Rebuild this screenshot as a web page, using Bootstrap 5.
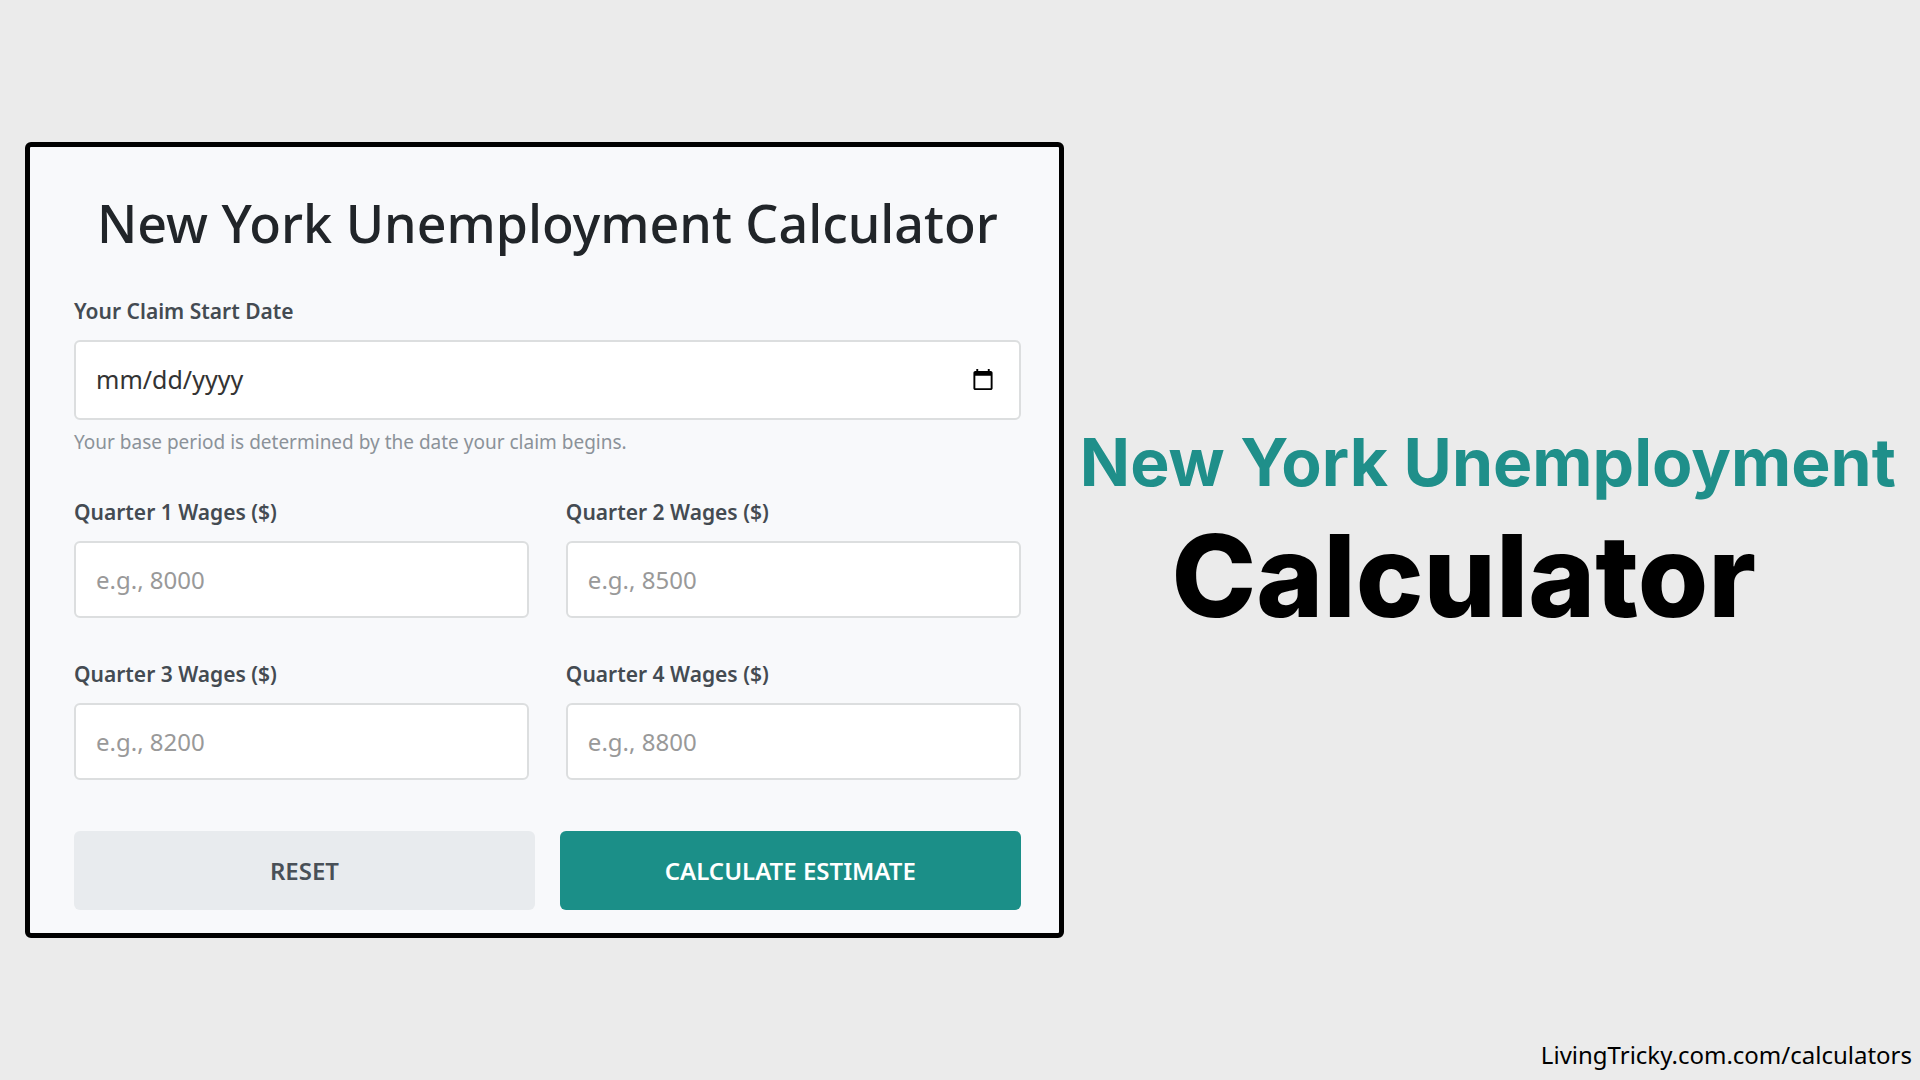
<!DOCTYPE html>
<html lang="en">
<head>
<meta charset="utf-8">
<meta name="viewport" content="width=device-width, initial-scale=1">
<title>New York Unemployment Calculator</title>
<link href="https://cdn.jsdelivr.net/npm/bootstrap@5.3.0/dist/css/bootstrap.min.css" rel="stylesheet">
<style>
  body { background: #ebebeb; font-family: "Noto Sans", sans-serif; color: #212529; }
  .page { min-height: 100vh; display: grid; grid-template-rows: 1fr auto 1fr; }
  .calc-panel { flex: 0 0 54.1%; margin-left: 25px; padding: 44px 38px 23px 44px; background: #f8f9fb; border: 5px solid #000; border-radius: 6px; }
  .calc-title { font-size: 52px; line-height: 64px; font-weight: 500; margin-bottom: 41px; color: #212529; }
  .form-label { font-size: 21px; line-height: 30px; font-weight: 600; margin-bottom: 14px; color: #444b52; }
  .form-control { height: 77px; padding: 0 20px; font-size: 24px; border: 2px solid #dcdedf; border-radius: 6px; color: #333; }
  .form-control::placeholder { color: #999; }
  .date-box { height: 80px; font-size: 25px; }
  .date-box::-webkit-calendar-picker-indicator { width: 24px; height: 24px; padding: 0; margin-right: 4px; }
  .date-hint { font-size: 19px; line-height: 24px; margin: 10px 0 43px; color: #8b9299; }
  .wages { display: grid; grid-template-columns: 1fr 1fr; gap: 41px 37px; margin-bottom: 51px; }
  .actions { gap: 25px; }
  .actions .btn { flex: 1 1 0; height: 79px; font-size: 24px; font-weight: 600; border: 0; border-radius: 6px; }
  .btn-reset, .btn-reset:hover { background: #e8ebee; color: #495057; }
  .btn-calc, .btn-calc:hover { background: #1b8f88; color: #fff; }
  .hero { font-family: Inter, sans-serif; padding: 0 8px 16px 0; }
  .hero-top { font-size: 66px; line-height: 80px; font-weight: 700; color: #1f8f8a; }
  .hero-main { font-size: 114px; line-height: 132px; font-weight: 800; color: #000; padding-right: 48px; }
  .site-link { font-size: 24px; line-height: 32px; color: #000; padding: 0 8px 9px; }
</style>
<script src="https://cdn.jsdelivr.net/npm/bootstrap@5.3.0/dist/js/bootstrap.bundle.min.js"></script>
</head>
<body>
<div class="page">
  <div></div>
  <main class="d-flex align-items-center">
    <form class="calc-panel">
      <h1 class="calc-title text-center text-nowrap">New York Unemployment Calculator</h1>
      <label class="form-label d-block" for="start">Your Claim Start Date</label>
      <input class="form-control date-box" type="date" id="start" aria-describedby="hint">
      <p class="date-hint" id="hint">Your base period is determined by the date your claim begins.</p>
      <div class="wages">
        <div><label class="form-label d-block" for="q1">Quarter 1 Wages ($)</label><input class="form-control" type="text" inputmode="decimal" id="q1" placeholder="e.g., 8000"></div>
        <div><label class="form-label d-block" for="q2">Quarter 2 Wages ($)</label><input class="form-control" type="text" inputmode="decimal" id="q2" placeholder="e.g., 8500"></div>
        <div><label class="form-label d-block" for="q3">Quarter 3 Wages ($)</label><input class="form-control" type="text" inputmode="decimal" id="q3" placeholder="e.g., 8200"></div>
        <div><label class="form-label d-block" for="q4">Quarter 4 Wages ($)</label><input class="form-control" type="text" inputmode="decimal" id="q4" placeholder="e.g., 8800"></div>
      </div>
      <div class="actions d-flex">
        <button class="btn btn-reset" type="reset">RESET</button>
        <button class="btn btn-calc" type="button">CALCULATE ESTIMATE</button>
      </div>
    </form>
    <section class="hero flex-fill text-center text-nowrap">
      <h2 class="hero-top mb-2">New York Unemployment</h2>
      <p class="hero-main mb-0">Calculator</p>
    </section>
  </main>
  <footer class="d-flex justify-content-end align-items-end">
    <a class="site-link text-decoration-none" href="#">LivingTricky.com.com/calculators</a>
  </footer>
</div>
</body>
</html>
